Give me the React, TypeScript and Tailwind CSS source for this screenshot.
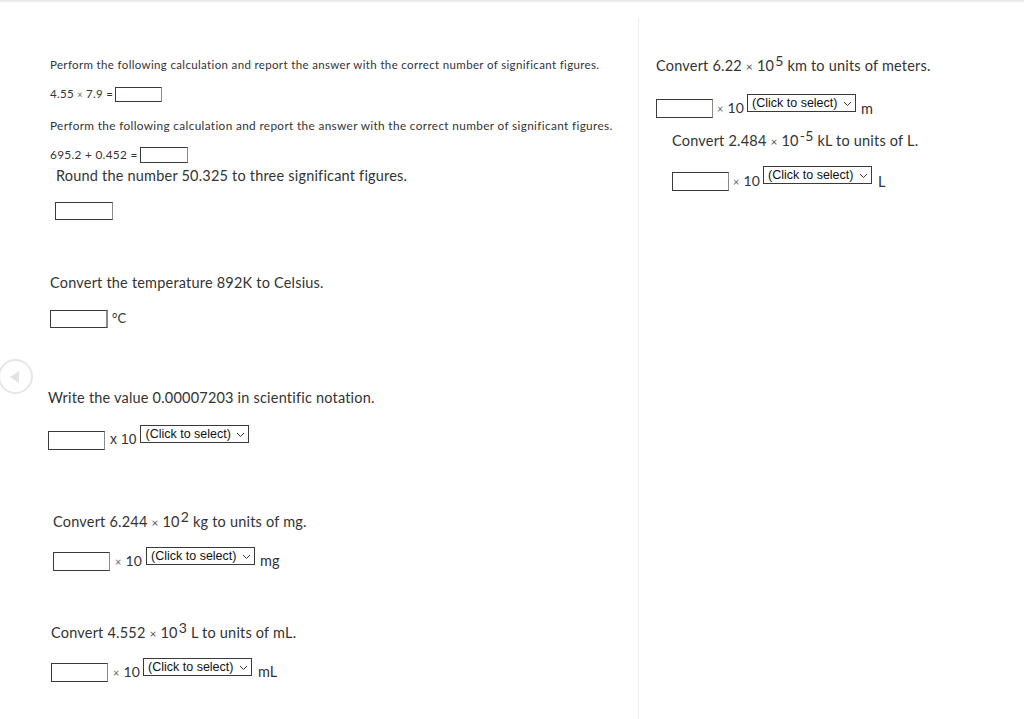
import React from 'react';

const lato = { fontFamily: 'Lato, "Open Sans", sans-serif' };

function Box({ className = '' }: { className?: string }) {
  return <div className={`bg-white border border-[#3a3a3a] border-r-[#8a8a8a] ${className}`} />;
}

function Select({ className = '' }: { className?: string }) {
  return (
    <div
      className={`flex items-center justify-between h-[18px] w-[109px] border border-[#3a3a3a] bg-white pl-[4px] pr-[3px] text-[12.5px] leading-none text-[#111] ${className}`}
      style={{ fontFamily: '"Liberation Sans", Arial, sans-serif' }}
    >
      <span>(Click to select)</span>
      <svg width="9" height="6" viewBox="0 0 9 6" className="mt-[1px]">
        <path d="M1 1 L4.5 4.5 L8 1" fill="none" stroke="#333" strokeWidth="1" />
      </svg>
    </div>
  );
}

function Sci({ pre, exp, post }: { pre: string; exp: string; post: string }) {
  return (
    <>
      {pre} <span className="text-[12px] text-[#555]">×</span> 10
      <sup className="text-[14px] relative -top-[5px] ml-[1px]">{exp}</sup> {post}
    </>
  );
}

function Times({ className = '' }: { className?: string }) {
  return (
    <span className={`text-[14px] text-[#333] whitespace-nowrap tracking-[0.2px] ${className}`}>
      <span className="text-[11px] text-[#666]">×</span> 10
    </span>
  );
}

const big = 'text-[14.5px] tracking-[0.2px] leading-[20px] [font-variant-ligatures:none]';

export default function App() {
  return (
    <div className="relative w-[1024px] h-[719px] bg-white overflow-hidden text-[#333]" style={lato}>
      <div className="h-[3px] bg-gradient-to-b from-[#e6e6e6] to-white" />

      <div className="absolute left-[-2px] top-[359px] w-[35px] h-[35px] rounded-full border-2 border-[#e6e6e6] flex items-center justify-center">
        <svg width="12" height="14" viewBox="0 0 12 14" className="mr-[4px]">
          <path d="M11 1 L2 7 L11 13 Z" fill="#e3e3e3" />
        </svg>
      </div>

      <div className="flex h-[716px]">
        {/* left column */}
        <div className="w-[638px] flex flex-col">
          <div className="mt-[54px] ml-[50px] text-[11.5px] tracking-[0.35px] leading-[16px] [font-variant-ligatures:none] whitespace-nowrap">
            Perform the following calculation and report the answer with the correct number of significant figures.
          </div>
          <div className="mt-[13px] ml-[50px] flex items-center text-[11.5px] tracking-[0.3px] h-[16px]">
            <span>4.55 <span className="text-[9px] text-[#666]">×</span> 7.9 =</span>
            <Box className="ml-[2px] w-[47px] h-[15px]" />
          </div>
          <div className="mt-[16px] ml-[50px] text-[11.8px] tracking-[0.35px] leading-[16px] [font-variant-ligatures:none] whitespace-nowrap">
            Perform the following calculation and report the answer with the correct number of significant figures.
          </div>
          <div className="mt-[13px] ml-[50px] flex items-center text-[11.8px] tracking-[0.3px] h-[16px]">
            <span>695.2 + 0.452 =</span>
            <Box className="ml-[2px] w-[48px] h-[16px]" />
          </div>
          <div className={`mt-[3px] ml-[56px] ${big}`}>
            Round the number 50.325 to three significant figures.
          </div>
          <Box className="mt-[16px] ml-[55px] w-[58px] h-[18px]" />

          <div className={`mt-[53px] ml-[50px] ${big}`}>
            Convert the temperature 892K to Celsius.
          </div>
          <div className="mt-[17px] ml-[50px] flex items-start h-[18px]">
            <Box className="w-[58px] h-[18px] border-r-2" />
            <span className="ml-[4px] text-[13px] leading-[16px]">°C</span>
          </div>

          <div className={`mt-[60px] ml-[48px] ${big}`}>
            Write the value 0.00007203 in scientific notation.
          </div>
          <div className="mt-[17px] ml-[48px] flex items-start h-[25px]">
            <Box className="mt-[6px] w-[57px] h-[19px]" />
            <span
              className="ml-[5px] mt-[6px] text-[14px] leading-[16px]"
              style={{ fontFamily: '"Liberation Sans", Arial, sans-serif' }}
            >
              x 10
            </span>
            <Select className="ml-[4px]" />
          </div>

          <div className={`mt-[62px] ml-[53px] ${big}`}>
            <Sci pre="Convert 6.244" exp="2" post="kg to units of mg." />
          </div>
          <div className="mt-[14px] ml-[53px] flex items-start h-[24px]">
            <Box className="mt-[5px] w-[57px] h-[19px]" />
            <Times className="ml-[5px] mt-[6px] leading-[16px]" />
            <Select className="ml-[4px]" />
            <span className="ml-[5px] mt-[6px] text-[14.5px] leading-[16px]">mg</span>
          </div>

          <div className={`mt-[52px] ml-[51px] ${big}`}>
            <Sci pre="Convert 4.552" exp="3" post="L to units of mL." />
          </div>
          <div className="mt-[14px] ml-[51px] flex items-start h-[24px]">
            <Box className="mt-[5px] w-[57px] h-[19px]" />
            <Times className="ml-[5px] mt-[6px] leading-[16px]" />
            <Select className="ml-[3px]" />
            <span className="ml-[6px] mt-[6px] text-[14.5px] leading-[16px]">mL</span>
          </div>
        </div>

        {/* right column */}
        <div className="mt-[15px] flex-1 border-l border-[#ececec] flex flex-col">
          <div className={`mt-[38px] ml-[17px] ${big}`}>
            <Sci pre="Convert 6.22" exp="5" post="km to units of meters." />
          </div>
          <div className="mt-[17px] ml-[17px] flex items-start h-[24px]">
            <Box className="mt-[5px] w-[57px] h-[19px]" />
            <Times className="ml-[4px] mt-[6px] leading-[16px]" />
            <Select className="ml-[3px]" />
            <span className="ml-[5px] mt-[7px] text-[14.5px] leading-[16px]">m</span>
          </div>
          <div className={`mt-[13px] ml-[33px] ${big}`}>
            <Sci pre="Convert 2.484" exp="-5" post="kL to units of L." />
          </div>
          <div className="mt-[14px] ml-[33px] flex items-start h-[24px]">
            <Box className="mt-[6px] w-[57px] h-[19px]" />
            <Times className="ml-[4px] mt-[7px] leading-[16px]" />
            <Select className="ml-[3px]" />
            <span className="ml-[6px] mt-[8px] text-[14.5px] leading-[16px]">L</span>
          </div>
        </div>
      </div>
    </div>
  );
}
